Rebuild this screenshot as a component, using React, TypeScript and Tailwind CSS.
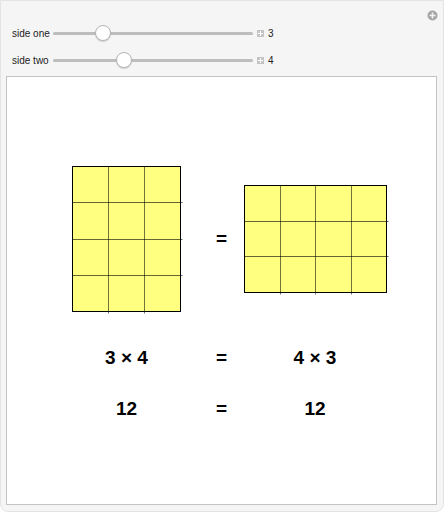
import React from "react";

function Grid({ cols, rows, w, h }: { cols: number; rows: number; w: number; h: number }) {
  const cw = w / cols;
  const ch = h / rows;
  const v = [];
  for (let i = 1; i < cols; i++) v.push(Math.round(i * cw) + 0.5);
  const hz = [];
  for (let j = 1; j < rows; j++) hz.push(Math.round(j * ch) + 0.5);
  return (
    <svg width={w + 1} height={h + 1} className="overflow-visible block">
      <rect x={0.5} y={0.5} width={w} height={h} fill="#ffff80" />
      {v.map((x) => (
        <line key={"v" + x} x1={x} y1={0.5} x2={x} y2={h + 2.5} stroke="#000" strokeOpacity={0.55} strokeWidth={1} />
      ))}
      {hz.map((y) => (
        <line key={"h" + y} x1={0.5} y1={y} x2={w + 2.5} y2={y} stroke="#000" strokeOpacity={0.6} strokeWidth={1} />
      ))}
      <rect x={0.5} y={0.5} width={w} height={h} fill="none" stroke="#000" strokeWidth={1} />
    </svg>
  );
}

function Slider({ label, value, thumb }: { label: string; value: string; thumb: number }) {
  return (
    <div className="flex items-center h-[26px] pl-[11px]">
      <div className="w-[41px] text-[10px] text-[#222]">{label}</div>
      <div className="relative w-[200px] h-[3px] rounded-full bg-[#bdbdbd]">
        <div
          className="absolute top-[-7px] w-[16px] h-[16px] rounded-full bg-white border border-[#b5b5b5] shadow-[0_1px_1px_rgba(0,0,0,0.15)]"
          style={{ left: thumb }}
        />
      </div>
      <div className="ml-[4px] w-[7px] h-[7px] bg-[#c4c4c4] relative flex items-center justify-center">
        <div className="absolute w-[5px] h-[1px] bg-white" />
        <div className="absolute w-[1px] h-[5px] bg-white" />
      </div>
      <div className="ml-[4px] text-[10px] text-[#222]">{value}</div>
    </div>
  );
}

export default function App() {
  const txt = "font-bold text-[19px] leading-[22px] text-black whitespace-pre";
  return (
    <div
      className="relative w-[444px] h-[512px] bg-[#f5f5f5] border border-[#e4e4e4] rounded-b-[8px] overflow-hidden"
      style={{ fontFamily: '"Liberation Sans", Arial, sans-serif' }}
    >
      <svg className="absolute left-[426px] top-[9px]" width="11" height="11" viewBox="0 0 11 11">
        <circle cx="5.5" cy="5.5" r="5" fill="#a5a5a5" />
        <rect x="2.5" y="4.7" width="6" height="1.6" fill="#f2f2f2" />
        <rect x="4.7" y="2.5" width="1.6" height="6" fill="#f2f2f2" />
      </svg>
      <div className="pt-[19px]">
        <Slider label="side one" value="3" thumb={42} />
        <div className="h-[1px]" />
        <Slider label="side two" value="4" thumb={63} />
      </div>
      <div className="ml-[5px] mt-[3px] w-[431px] h-[429px] bg-white border border-[#c3c3c3]">
        <div className="pt-[88px] pl-[50px]">
          <div className="flex items-center h-[147px]">
            <div className="w-[139px] flex justify-center">
              <Grid cols={3} rows={4} w={108} h={145} />
            </div>
            <div className="w-[51px] flex justify-center">
              <span className={txt}>=</span>
            </div>
            <div className="w-[136px] flex justify-center">
              <Grid cols={4} rows={3} w={142} h={107} />
            </div>
          </div>
          <div className="flex items-center mt-[35px] h-[22px]">
            <div className="w-[139px] flex justify-center">
              <span className={txt}>3 × 4</span>
            </div>
            <div className="w-[51px] flex justify-center">
              <span className={txt}>=</span>
            </div>
            <div className="w-[136px] flex justify-center">
              <span className={txt}>4 × 3</span>
            </div>
          </div>
          <div className="flex items-center mt-[29px] h-[22px]">
            <div className="w-[139px] flex justify-center">
              <span className={txt}>12</span>
            </div>
            <div className="w-[51px] flex justify-center">
              <span className={txt}>=</span>
            </div>
            <div className="w-[136px] flex justify-center">
              <span className={txt}>12</span>
            </div>
          </div>
        </div>
      </div>
    </div>
  );
}
